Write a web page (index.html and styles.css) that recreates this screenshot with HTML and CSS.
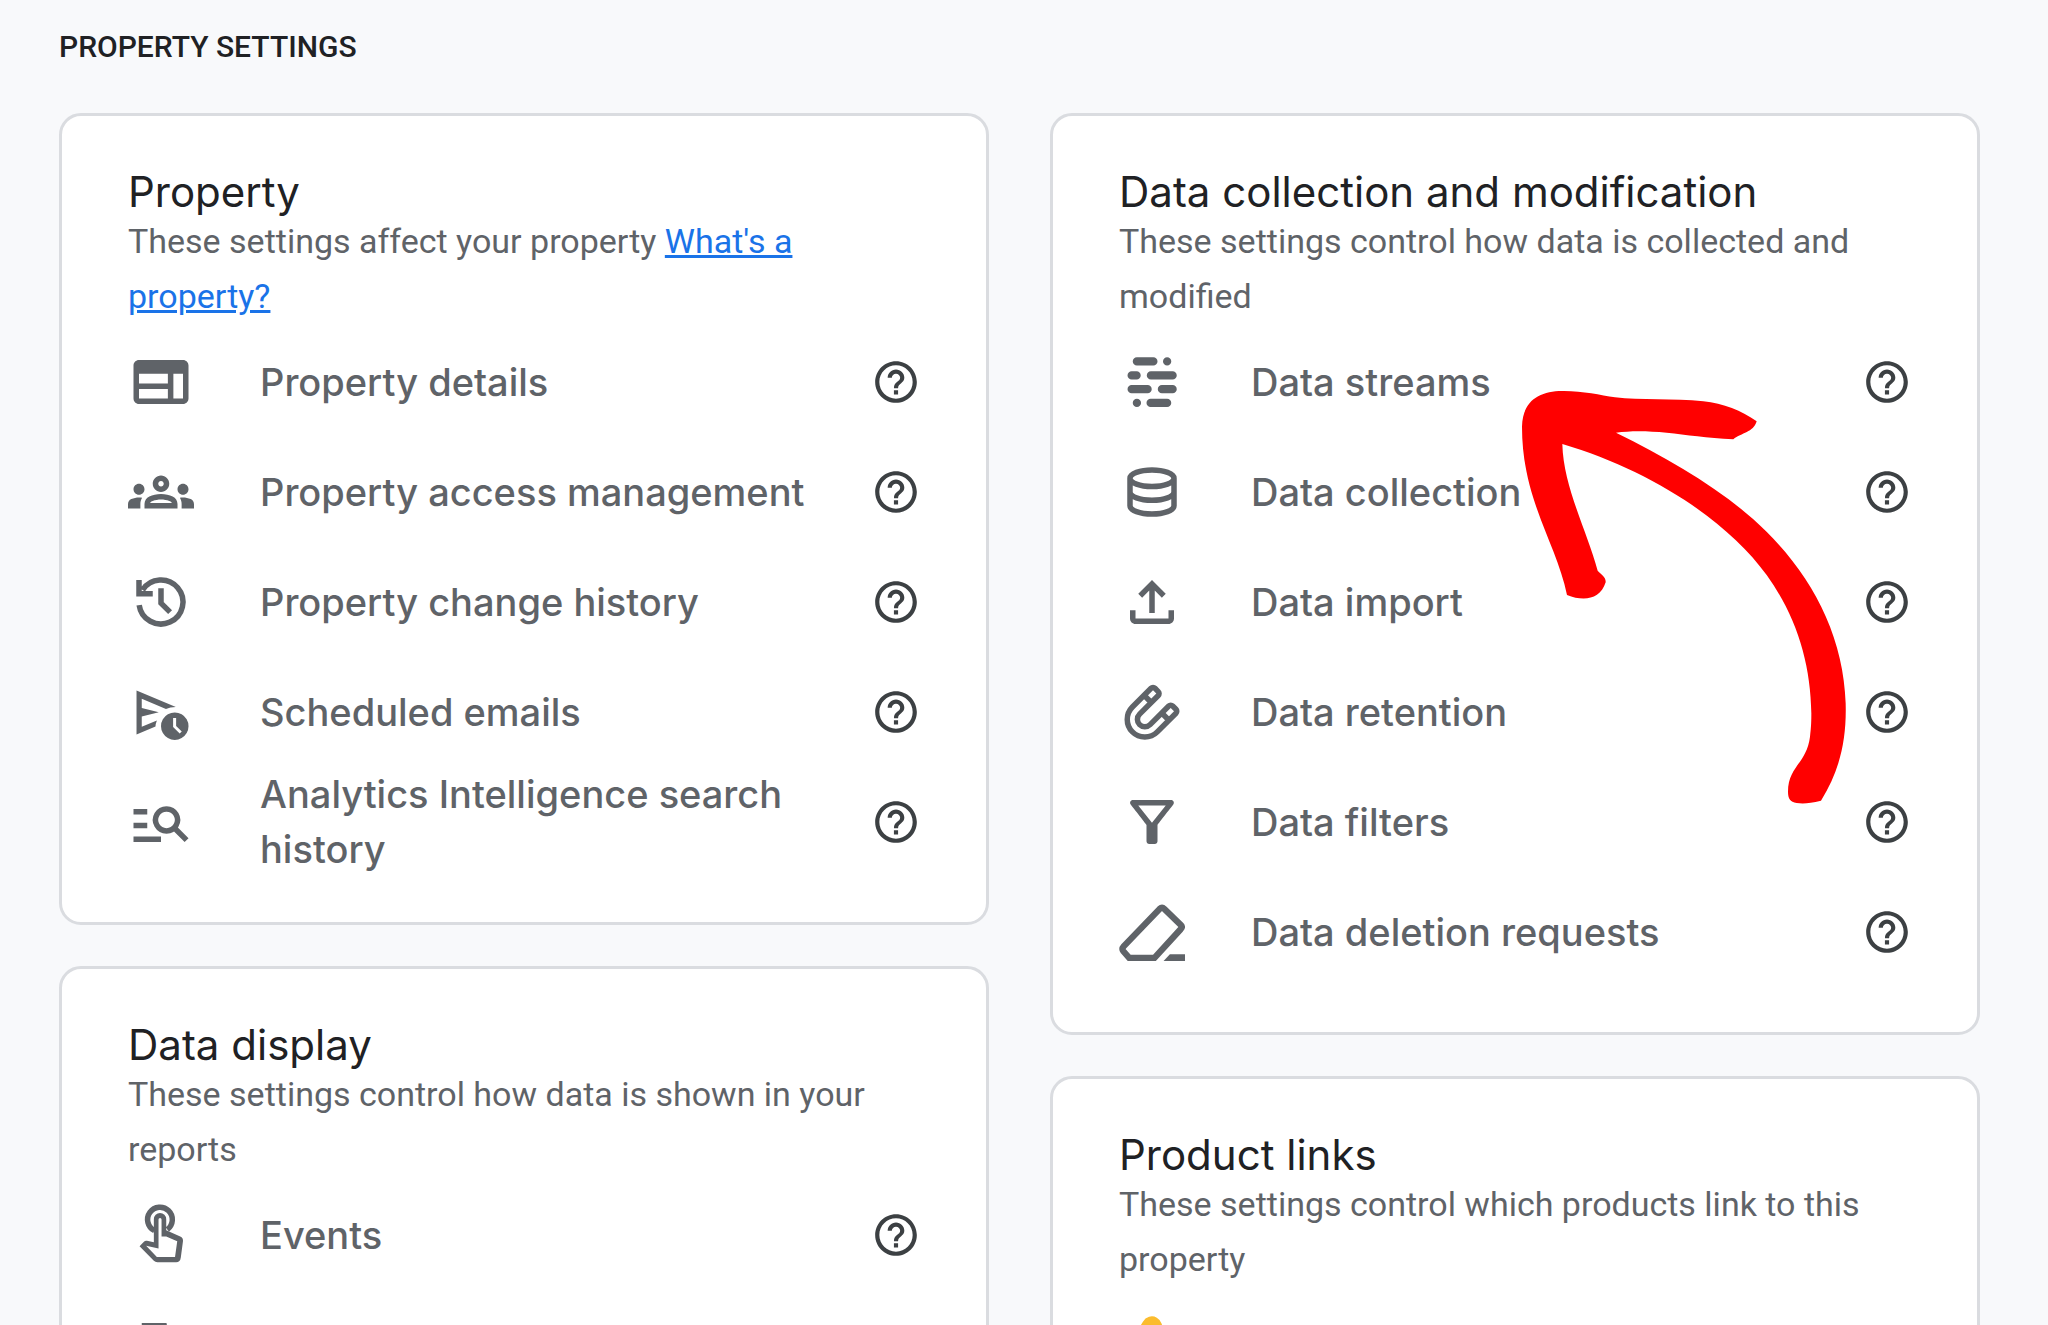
FILE: index.html
```html
<!doctype html>
<html lang="en">
  <head>
    <meta charset="utf-8">
    <title>Property settings</title>
    <link rel="stylesheet" href="styles.css">
  </head>
  <body>

    <!-- icons -->
    <svg class="sprite" aria-hidden="true">
      <symbol id="help" viewBox="0 0 24 24">
        <path d="M11 18h2v-2h-2v2zm1-16C6.48 2 2 6.48 2 12s4.48 10 10 10 10-4.48 10-10S17.52 2 12 2zm0 18c-4.41 0-8-3.59-8-8s3.59-8 8-8 8 3.59 8 8-3.59 8-8 8zm0-14c-2.21 0-4 1.79-4 4h2c0-1.1.9-2 2-2s2 .9 2 2c0 2-3 1.75-3 5h2c0-2.25 3-2.5 3-5 0-2.21-1.79-4-4-4z"/>
      </symbol>
      <symbol id="web" viewBox="0 0 24 24">
        <path fill-rule="evenodd" d="M20 4H4c-1.1 0-2 .9-2 2v12c0 1.1.9 2 2 2h16c1.1 0 2-.9 2-2V6c0-1.1-.9-2-2-2zM4 9h10.5v3.500H4zM4 14.500h10.5V18H4zM16.500 9H20v9h-3.500z"/>
      </symbol>
      <symbol id="groups" viewBox="0 0 24 24">
        <path d="M4 13c1.100 0 2-.9 2-2s-.9-2-2-2-2 .9-2 2 .9 2 2 2zm1.130 1.100c-.37-.06-.74-.1-1.130-.1-.99 0-1.930.21-2.780.58C.48 14.900 0 15.620 0 16.430V18h4.500v-1.610c0-.83.23-1.610.63-2.290zM20 13c1.100 0 2-.9 2-2s-.9-2-2-2-2 .9-2 2 .9 2 2 2zm4 3.430c0-.81-.48-1.530-1.220-1.850-.85-.37-1.790-.58-2.780-.58-.39 0-.76.04-1.130.1.4.68.63 1.460.63 2.290V18H24v-1.570zM16.240 13.650c-1.170-.52-2.610-.9-4.240-.9s-3.070.39-4.240.9C6.680 14.130 6 15.210 6 16.390V18h12v-1.610c0-1.180-.68-2.260-1.760-2.740zM8.070 16c.09-.23.13-.39.91-.69.97-.38 1.990-.56 3.020-.56s2.050.18 3.020.56c.77.3.81.46.91.69H8.070zM12 8c.55 0 1 .45 1 1s-.45 1-1 1-1-.45-1-1 .45-1 1-1m0-2c-1.660 0-3 1.340-3 3s1.340 3 3 3 3-1.340 3-3-1.340-3-3-3z"/>
      </symbol>
      <symbol id="history" viewBox="0 0 24 24">
        <path class="line" d="M4.060 13.100A8 8 0 1 0 5.300 7.600M4 4v5h5M12 7v5.400l3.300 3.300"/>
      </symbol>
      <symbol id="schedule" viewBox="0 0 24 24">
        <path fill-rule="evenodd" d="M3.100 4.200L17.400 10.200Q15.300 10.200 13.800 10.900L5 7.200V10.500L11.200 12.050 5 13.600V17.400L10.500 15.050Q10 16.200 10 17.300L3.100 20.200z"/>
        <path fill-rule="evenodd" d="M17 12.150a5 5 0 1 0 .01 0zM16.400 14.150h1.100v2.900l2.050 2.050-.75.75-2.400-2.400z"/>
      </symbol>
      <symbol id="search" viewBox="0 0 24 24">
        <path d="M2 7.250h5v2H2zM2 12.250h5v2H2zM2 17.250h10v2H2z"/>
        <path class="line" d="M14 7.250a4 4 0 1 0 .01 0M16.800 14.100l4.500 4.500"/>
      </symbol>
      <symbol id="streams" viewBox="0 0 24 24">
        <path class="line thick" d="M6.500 4.500h6M17.500 4.500h.01M4.600 9.600h1.800M11.600 9.600h7.900M4.600 14.600h5.800M15.600 14.600h3.900M6.500 19.600h.01M11.500 19.600h6"/>
      </symbol>
      <symbol id="database" viewBox="0 0 24 24">
        <path class="line" d="M4 7c0-1.700 3.600-3 8-3s8 1.300 8 3-3.600 3-8 3-8-1.300-8-3v10c0 1.700 3.600 3 8 3s8-1.300 8-3V7M4 12c0 1.700 3.600 3 8 3s8-1.300 8-3"/>
      </symbol>
      <symbol id="upload" viewBox="0 0 24 24">
        <path d="M18 15v3H6v-3H4v3c0 1.100.9 2 2 2h12c1.100 0 2-.9 2-2v-3h-2zM7 9l1.410 1.410L11 7.830V16h2V7.830l2.590 2.580L17 9l-5-5-5 5z"/>
      </symbol>
      <symbol id="magnet" viewBox="0 0 24 24">
        <path class="line" transform="translate(9.4 14.7) rotate(45)" d="M-6.400 0V-9.600a1 1 0 0 1 1-1h1.700a1 1 0 0 1 1 1V0a2.700 2.700 0 0 0 5.400 0V-9.600a1 1 0 0 1 1-1h1.700a1 1 0 0 1 1 1V0A6.400 6.400 0 0 1-6.400 0zM-6.400-6h3.700M2.700-6h3.700"/>
      </symbol>
      <symbol id="filter" viewBox="0 0 24 24">
        <path d="M7 6h10l-5.010 6.300L7 6zm-2.750-.39C6.270 8.200 10 13 10 13v6c0 .55.45 1 1 1h2c.55 0 1-.45 1-1v-6s3.720-4.800 5.740-7.390c.51-.66.04-1.610-.79-1.610H5.040c-.83 0-1.300.95-.79 1.610z"/>
      </symbol>
      <symbol id="eraser" viewBox="0 0 24 24">
        <path class="line eraser-line" d="M14.800 3.600L1.700 17.200q-.8.900-.1 1.800L3.700 21.400H12.900L22.400 11q.8-.8 0-1.600L16.500 3.600q-.85-.8-1.700 0z"/>
        <path d="M16.200 22.500l2.300-2.400H24v2.400z"/>
      </symbol>
      <symbol id="touch" viewBox="0 0 24 24">
        <path class="line" d="M9.600 10.400A4.500 4.500 0 1 1 14.300 10"/>
        <path fill-rule="evenodd" d="M9.400 6.250a2.250 2.250 0 0 1 4.500 0V10.300L19 12.500q1.100.5 1 1.700L19.200 20.200q-.2 1.700-1.700 1.700H10.700q-.8 0-1.300-.5L4.200 16.100 5.700 14.500q.5-.5 1.200-.4L9.400 14.600zM12.200 6.400q0-.6-.55-.6t-.55.6V16.900L6.600 15.900 10.500 20H17.100L17.900 14.300 13.900 12.500H12.200z"/>
      </symbol>
      <symbol id="flag" viewBox="0 0 24 24">
        <path d="M14.400 6L14 4H5v17h2v-7h5.600l.4 2h7V6h-5.600zM12.400 6l.4 2H18v6h-3.400l-.4-2H7V6h5.400z"/>
      </symbol>
      <symbol id="ads" viewBox="0 0 24 24">
        <path fill="#4285f4" d="M9 4l9.700 16.700a3.700 3.700 0 0 0 3.500-5.300L15 4z"/>
        <path fill="#fbbc2e" d="M8.700 3.500a3.700 3.700 0 0 1 6.500 3.600L7.200 20.500.9 16.700z"/>
        <circle fill="#34a853" cx="4.300" cy="18.500" r="3.700"/>
      </symbol>
    </svg>

    <main class="page">
      <h1 class="heading">PROPERTY SETTINGS</h1>

      <div class="columns">
        <div class="col">

          <section class="card">
            <h2 class="title">Property</h2>
            <p class="desc">These settings affect your property <a href="#about">What's a property?</a></p>
            <ul class="list">
              <li class="item">
                <a class="link" href="#details"><svg class="icon"><use href="#web"/></svg><span>Property details</span></a>
                <button class="help" type="button" aria-label="About property details"><svg><use href="#help"/></svg></button>
              </li>
              <li class="item">
                <a class="link" href="#access"><svg class="icon"><use href="#groups"/></svg><span>Property access management</span></a>
                <button class="help" type="button" aria-label="About property access management"><svg><use href="#help"/></svg></button>
              </li>
              <li class="item">
                <a class="link" href="#changes"><svg class="icon"><use href="#history"/></svg><span>Property change history</span></a>
                <button class="help" type="button" aria-label="About property change history"><svg><use href="#help"/></svg></button>
              </li>
              <li class="item">
                <a class="link" href="#emails"><svg class="icon"><use href="#schedule"/></svg><span>Scheduled emails</span></a>
                <button class="help" type="button" aria-label="About scheduled emails"><svg><use href="#help"/></svg></button>
              </li>
              <li class="item">
                <a class="link" href="#searches"><svg class="icon"><use href="#search"/></svg><span>Analytics Intelligence search history</span></a>
                <button class="help" type="button" aria-label="About search history"><svg><use href="#help"/></svg></button>
              </li>
            </ul>
          </section>

          <section class="card">
            <h2 class="title">Data display</h2>
            <p class="desc">These settings control how data is shown in your reports</p>
            <ul class="list">
              <li class="item">
                <a class="link" href="#events"><svg class="icon"><use href="#touch"/></svg><span>Events</span></a>
                <button class="help" type="button" aria-label="About events"><svg><use href="#help"/></svg></button>
              </li>
              <li class="item">
                <a class="link" href="#flagged" aria-label="Flagged"><svg class="icon"><use href="#flag"/></svg></a>
              </li>
            </ul>
          </section>

        </div>
        <div class="col">

          <section class="card">
            <h2 class="title">Data collection and modification</h2>
            <p class="desc">These settings control how data is collected and modified</p>
            <ul class="list">
              <li class="item">
                <a class="link" href="#streams-page"><svg class="icon"><use href="#streams"/></svg><span>Data streams</span></a>
                <button class="help" type="button" aria-label="About data streams"><svg><use href="#help"/></svg></button>
              </li>
              <li class="item">
                <a class="link" href="#collection"><svg class="icon"><use href="#database"/></svg><span>Data collection</span></a>
                <button class="help" type="button" aria-label="About data collection"><svg><use href="#help"/></svg></button>
              </li>
              <li class="item">
                <a class="link" href="#import"><svg class="icon"><use href="#upload"/></svg><span>Data import</span></a>
                <button class="help" type="button" aria-label="About data import"><svg><use href="#help"/></svg></button>
              </li>
              <li class="item">
                <a class="link" href="#retention"><svg class="icon"><use href="#magnet"/></svg><span>Data retention</span></a>
                <button class="help" type="button" aria-label="About data retention"><svg><use href="#help"/></svg></button>
              </li>
              <li class="item">
                <a class="link" href="#filters"><svg class="icon"><use href="#filter"/></svg><span>Data filters</span></a>
                <button class="help" type="button" aria-label="About data filters"><svg><use href="#help"/></svg></button>
              </li>
              <li class="item">
                <a class="link" href="#deletion"><svg class="icon"><use href="#eraser"/></svg><span>Data deletion requests</span></a>
                <button class="help" type="button" aria-label="About data deletion requests"><svg><use href="#help"/></svg></button>
              </li>
            </ul>
            <!-- arrow pointing at data streams -->
            <svg class="arrow" viewBox="60 60 984 1245" aria-hidden="true">
              <path d="M186 63C245 62 300 75 345 82C420 92 520 84 610 94C670 100 725 122 770 154C760 188 725 188 700 208C620 204 560 194 500 188C440 182 390 182 348 188C500 262 650 350 760 448C920 590 1030 780 1037 1000C1040 1110 1020 1200 963 1292C930 1300 910 1302 890 1299C870 1296 864 1285 864 1265C864 1190 920 1180 930 1100C934 1070 934 1050 934 1030C932 880 890 740 800 615C680 450 450 300 187 222C190 350 260 480 293 602C305 615 318 620 317 637C300 690 250 695 201 675C170 520 66 390 66 170C68 90 120 64 186 63Z"/>
            </svg>
          </section>

          <section class="card">
            <h2 class="title">Product links</h2>
            <p class="desc">These settings control which products link to this property</p>
            <ul class="list">
              <li class="item">
                <a class="link" href="#ads-links" aria-label="Ads links"><svg class="icon"><use href="#ads"/></svg></a>
              </li>
            </ul>
          </section>

        </div>
      </div>
    </main>

  </body>
</html>
```
FILE: styles.css
```css
* {
  box-sizing: border-box;
}
body {
  margin: 0;
  background-color: #f8f9fb;
  color: #5f6368;
  font-family: Roboto, sans-serif;
}
.sprite {
  display: none;
}
.page {
  height: 100vh;
  overflow: hidden;
  padding: 27px 68px 0 59px;
}
.heading {
  margin: 0 0 46px;
  color: #202124;
  font-size: 30px;
  font-weight: 500;
  line-height: 40px;
}
.columns {
  display: grid;
  grid-template-columns: 1fr 1fr;
  align-items: start;
  gap: 61px;
}
.col {
  display: flex;
  flex-direction: column;
  gap: 41px;
}
.card {
  position: relative;
  padding: 54px 65px 45px 66px;
  border: 3px solid #dadce0;
  border-radius: 22px;
  background-color: #fff;
}
.title {
  margin: 0;
  color: #202124;
  font-family: Inter, sans-serif;
  font-size: 42px;
  font-weight: 400;
  line-height: 44px;
}
.desc {
  margin: 0 0 3px;
  font-size: 34px;
  line-height: 55px;
}
.desc a {
  color: #1a73e8;
}
.list {
  margin: 0;
  padding: 0;
  list-style: none;
}
.item {
  display: flex;
  align-items: center;
  height: 110px;
}
.link {
  display: flex;
  flex: 1;
  align-items: center;
  gap: 66px;
  color: inherit;
  font-family: Inter, sans-serif;
  font-size: 38px;
  font-weight: 500;
  line-height: 55px;
  text-decoration: none;
}
.icon {
  flex: none;
  width: 66px;
  height: 66px;
  fill: #5f6368;
}
.line {
  fill: none;
  stroke: #5f6368;
  stroke-width: 2;
}
.thick {
  stroke-width: 3;
  stroke-linecap: round;
}
.eraser-line {
  stroke-width: 2.3;
}
.help {
  display: block;
  width: 50px;
  height: 50px;
  padding: 0;
  border: 0;
  background: none;
  cursor: pointer;
}
.help svg {
  display: block;
  width: 50px;
  height: 50px;
  fill: #3c4043;
}
.arrow {
  position: absolute;
  top: 274px;
  right: 129px;
  width: 328px;
  height: 415px;
  fill: #f00;
  pointer-events: none;
}
```
